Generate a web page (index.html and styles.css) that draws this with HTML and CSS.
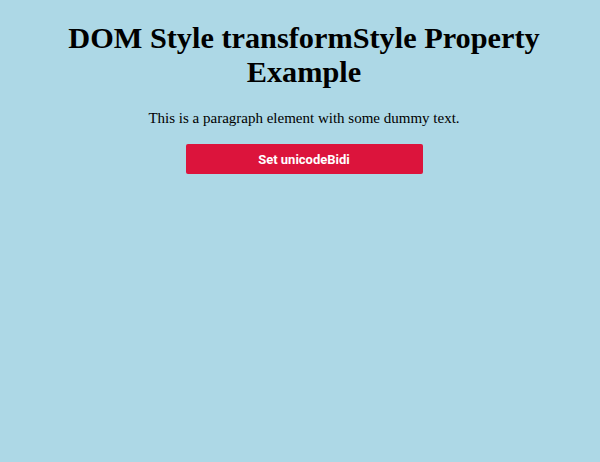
FILE: index.html
```html
<!DOCTYPE html>
<html>
<head>
<meta charset="utf-8">
<link rel="stylesheet" href="styles.css">
</head>
<body>
<div class="page">
  <h1 class="title">DOM Style transformStyle Property Example</h1>
  <p class="text">This is a paragraph element with some dummy text.</p>
  <button class="btn">Set unicodeBidi</button>
</div>
</body>
</html>
```

FILE: styles.css
```css
html, body {
  margin: 0;
  padding: 0;
  background: #add8e6;
}
body {
  padding-left: 8px;
  height: 462px;
  box-sizing: border-box;
}
.page {
  display: flex;
  flex-direction: column;
  align-items: center;
  padding-top: 21px;
}
.title {
  font-family: "Liberation Serif", "Times New Roman", serif;
  font-weight: bold;
  font-size: 30.3px;
  line-height: 34px;
  text-align: center;
  margin: 0;
  max-width: 520px;
  color: #000;
}
.text {
  font-family: "Liberation Serif", "Times New Roman", serif;
  font-size: 15px;
  line-height: 17px;
  margin: 21px 0 0;
  color: #000;
}
.btn {
  margin-top: 17px;
  width: 237px;
  height: 30px;
  border: none;
  border-radius: 2px;
  background: #dc143c;
  color: #fff;
  font-family: Roboto, "Liberation Sans", sans-serif;
  font-weight: bold;
  font-size: 13px;
  padding: 0;
}
```
